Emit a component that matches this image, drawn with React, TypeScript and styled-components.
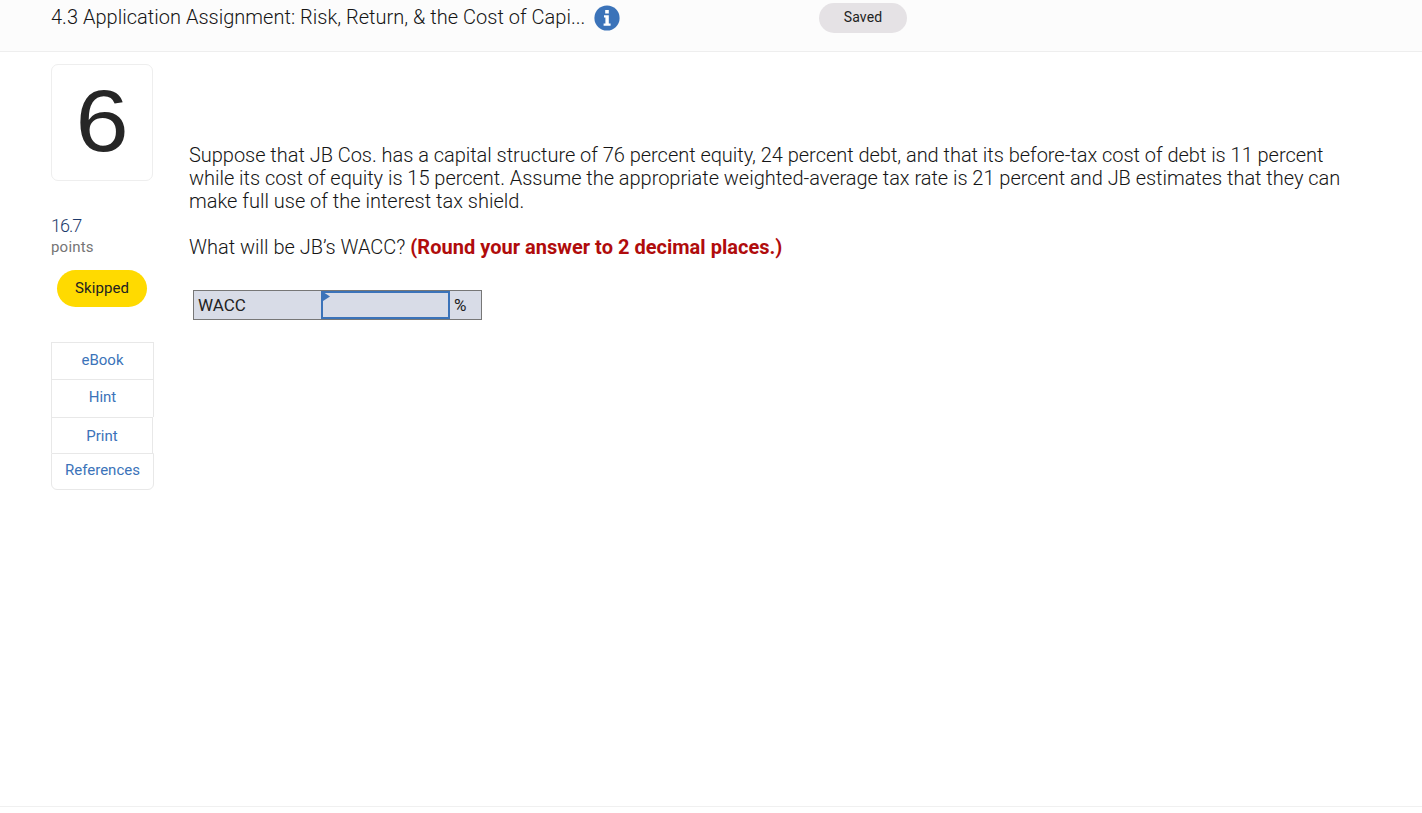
import React from 'react';
import styled, { createGlobalStyle } from 'styled-components';

const GlobalStyle = createGlobalStyle`
  * {
    box-sizing: border-box;
  }

  body {
    margin: 0;
    background: #fff;
    color: #151515;
    font-family: Roboto, 'Liberation Sans', sans-serif;
    font-weight: 300;
  }

  button {
    font-family: inherit;
    border: 0;
    padding: 0;
    cursor: pointer;
  }
`;

const Page = styled.div`
  height: 813px;
  display: flex;
  flex-direction: column;
  overflow: hidden;
`;

const Header = styled.header`
  height: 52px;
  flex: none;
  display: flex;
  align-items: flex-start;
  padding-left: 51px;
  background: #fcfcfc;
  border-bottom: 1px solid #eee;
`;

const Title = styled.h1`
  width: 543px;
  margin: 0;
  padding-top: 5px;
  font-size: 20px;
  line-height: 24px;
  letter-spacing: 0.02px;
  font-weight: 300;
  white-space: nowrap;
`;

const InfoButton = styled.button`
  width: 26px;
  height: 26px;
  margin-top: 5px;
  background: none;

  svg {
    display: block;
  }
`;

const SavedBadge = styled.div`
  width: 88px;
  height: 30px;
  margin: 3px 0 0 199px;
  border-radius: 15px;
  background: #e5e2e5;
  color: #222;
  font-size: 14px;
  font-weight: 400;
  line-height: 29px;
  letter-spacing: 0.1px;
  text-align: center;
`;

const Main = styled.main`
  flex: 1;
  display: flex;
  padding: 12px 0 0 51px;
`;

const Sidebar = styled.aside`
  width: 103px;
  flex: none;
`;

const QuestionNumber = styled.div`
  width: 102px;
  height: 117px;
  border: 1px solid #eee;
  border-radius: 7px;
  color: #262626;
  font-family: 'Liberation Sans', sans-serif;
  font-size: 87px;
  font-weight: 400;
  line-height: 112px;
  text-align: center;

  span {
    display: inline-block;
    transform: scaleX(1.1);
  }
`;

const Points = styled.div`
  margin-top: 34px;
  font-size: 18px;
  line-height: 22px;
  letter-spacing: -1px;
  color: #1d3a6b;

  span {
    display: block;
    font-size: 15px;
    font-weight: 400;
    line-height: 21px;
    letter-spacing: 0.2px;
    color: #757575;
  }
`;

const SkippedBadge = styled.div`
  width: 90px;
  height: 37px;
  margin: 12px 0 35px 6px;
  border-radius: 19px;
  background: #ffda00;
  color: #222;
  font-size: 15px;
  font-weight: 400;
  line-height: 36px;
  letter-spacing: 0.1px;
  text-align: center;
`;

const Tools = styled.nav`
  display: flex;
  flex-direction: column;
`;

const ToolButton = styled.button<{ $height: number; $narrow?: boolean }>`
  width: ${({ $narrow }) => ($narrow ? 102 : 103)}px;
  height: ${({ $height }) => $height}px;
  padding-bottom: ${({ $narrow }) => ($narrow ? 0 : 3)}px;
  border: 1px solid #e8e8e8;
  border-bottom-width: 0;
  background: #fff;
  color: #3b73b9;
  font-size: 15px;
  font-weight: 400;

  &:last-child {
    padding-bottom: 4px;
    border-bottom-width: 1px;
    border-radius: 0 0 6px 6px;
  }
`;

const Question = styled.section`
  padding: 80px 0 0 35px;
  font-size: 20px;
  line-height: 23px;
`;

const Paragraph = styled.p`
  margin: 0 0 23px;
  white-space: nowrap;
`;

const Line = styled.span<{ $spacing?: number }>`
  display: block;
  letter-spacing: ${({ $spacing = 0 }) => $spacing}px;
`;

const Hint = styled.strong`
  color: #b00c0c;
  font-weight: 700;
  letter-spacing: 0.02px;
`;

const AnswerTable = styled.div`
  width: 289px;
  height: 30px;
  margin: 31px 0 0 4px;
  display: grid;
  grid-template-columns: 128px 128px 31px;
  border: 1px solid #777;
  background: #d8dce7;
  color: #222;
  font-size: 17px;
  font-weight: 400;
  line-height: 28px;
`;

const Cell = styled.div`
  padding-left: 4px;
`;

const AnswerCell = styled.div`
  margin-left: -1px;
  border: 2px solid #3b73b9;

  svg {
    display: block;
    margin-top: -1px;
  }
`;

const Footer = styled.footer`
  height: 7px;
  flex: none;
  border-top: 1px solid #f0f0f0;
`;

const tools = [
  { label: 'eBook', height: 37 },
  { label: 'Hint', height: 38 },
  { label: 'Print', height: 36, narrow: true },
  { label: 'References', height: 37 },
];

export default function App() {
  return (
    <>
      <GlobalStyle />
      <Page>
        <Header>
          <Title>4.3 Application Assignment: Risk, Return, &amp; the Cost of Capi...</Title>
          <InfoButton type="button" aria-label="Info">
            <svg width="26" height="26" viewBox="0 0 26 26">
              <circle cx="13" cy="13" r="12.6" fill="#3b73b9" />
              <path d="M11.2 5h3.6v3.4h-3.6zM10 10.3h4.8v8.2h1.8v2.2H9.6v-2.2h1.8v-6H10z" fill="#fff" />
            </svg>
          </InfoButton>
          <SavedBadge>Saved</SavedBadge>
        </Header>
        <Main>
          <Sidebar>
            <QuestionNumber>
              <span>6</span>
            </QuestionNumber>
            <Points>
              16.7<span>points</span>
            </Points>
            <SkippedBadge>Skipped</SkippedBadge>
            <Tools>
              {tools.map(({ label, height, narrow }) => (
                <ToolButton key={label} type="button" $height={height} $narrow={narrow}>
                  {label}
                </ToolButton>
              ))}
            </Tools>
          </Sidebar>
          <Question>
            <Paragraph>
              <Line $spacing={-0.03}>
                Suppose that JB Cos. has a capital structure of 76 percent equity, 24 percent debt, and that its before-tax cost of debt is 11 percent
              </Line>
              <Line $spacing={-0.03}>
                while its cost of equity is 15 percent. Assume the appropriate weighted-average tax rate is 21 percent and JB estimates that they can
              </Line>
              <Line>make full use of the interest tax shield.</Line>
            </Paragraph>
            <Paragraph>
              What will be JB’s WACC? <Hint>(Round your answer to 2 decimal places.)</Hint>
            </Paragraph>
            <AnswerTable>
              <Cell>WACC</Cell>
              <AnswerCell>
                <svg width="7" height="9" viewBox="0 0 7 9">
                  <path d="M0 0l7 4.5L0 9z" fill="#3b73b9" />
                </svg>
              </AnswerCell>
              <Cell>%</Cell>
            </AnswerTable>
          </Question>
        </Main>
        <Footer />
      </Page>
    </>
  );
}
